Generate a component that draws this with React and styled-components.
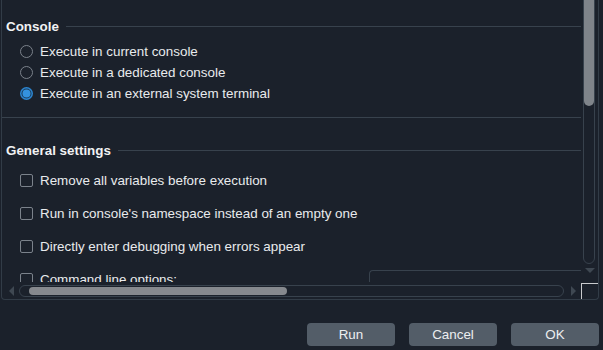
import React from "react";
import styled, { createGlobalStyle } from "styled-components";

const Global = createGlobalStyle`
  html, body { margin: 0; padding: 0; background: #1b212b; }
  body { font-family: "Liberation Sans", Arial, sans-serif; font-size: 13.4px; color: #e9ebed; }
  #root { width: 603px; height: 350px; overflow: hidden; }
`;

const Dialog = styled.div`
  display: flex;
  flex-direction: column;
  height: 350px;
  padding: 0 4px 0 1px;
  box-sizing: border-box;
`;

const Panel = styled.div`
  display: grid;
  grid-template-columns: 1fr 16px;
  grid-template-rows: 282px 17px;
  border: 1px solid #323c47;
  border-top: none;
  border-radius: 0 0 4px 4px;
`;

const Viewport = styled.div`
  overflow: hidden;
  padding-right: 1px;
`;

const Group = styled.div`
  display: flex;
  flex-direction: column;
  padding-top: ${(p) => p.$top}px;
  padding-bottom: ${(p) => p.$bottom || 0}px;
  border-bottom: ${(p) => (p.$sep ? "1px solid #38424d" : "none")};
`;

const Title = styled.div`
  display: flex;
  align-items: center;
  gap: 7px;
  height: 16px;
  padding-left: 4px;
  font-weight: bold;
  color: #f1f2f3;
  margin-bottom: ${(p) => p.$gap}px;
  &::after {
    content: "";
    flex: 1;
    height: 1px;
    background: #38424d;
  }
`;

const OptionRow = styled.label`
  display: flex;
  align-items: center;
  gap: 7px;
  height: ${(p) => p.$h}px;
  padding-left: 18px;
  white-space: nowrap;
`;

const RadioOff = styled.span`
  width: 11px;
  height: 11px;
  border: 1px solid #7b828b;
  border-radius: 50%;
  flex: none;
`;

const CheckBox = styled.span`
  width: 11px;
  height: 11px;
  border: 1px solid #7b828b;
  border-radius: 2px;
  flex: none;
`;

const Label = styled.span`
  flex: ${(p) => (p.$grow ? 1 : "none")};
`;

const CmdInput = styled.div`
  width: 212px;
  height: 24px;
  margin-top: 4px;
  border: 1px solid #38424d;
  border-radius: 4px 0 0 4px;
  border-right: none;
  box-sizing: border-box;
  flex: none;
`;

const VScroll = styled.div`
  display: flex;
  flex-direction: column;
  align-items: flex-start;
  padding-left: 1px;
`;

const VTrack = styled.div`
  width: 10px;
  height: 266px;
  margin-top: -4px;
  border: 1px solid #38424d;
  border-radius: 0 0 6px 6px;
  display: flex;
  flex-direction: column;
`;

const VThumb = styled.div`
  width: 10px;
  height: 109px;
  background: #7f848a;
  border-radius: 0 0 5px 5px;
`;

const Arrow = styled.svg`
  display: block;
  flex: none;
`;

const HScroll = styled.div`
  display: flex;
  align-items: center;
  padding-left: 7px;
`;

const HTrack = styled.div`
  width: 545px;
  height: 12px;
  margin-left: 4px;
  box-sizing: border-box;
  border: 1px solid #38424d;
  border-radius: 6px;
  display: flex;
  align-items: center;
  padding-left: 9px;
`;

const HThumb = styled.div`
  width: 258px;
  height: 8px;
  background: #86898e;
  border-radius: 4px;
`;

const Corner = styled.div`
  width: 16px;
  height: 15px;
  align-self: start;
  border-left: 1px solid #c9cbce;
  border-top: 1px solid #c9cbce;
  margin-left: -1px;
  margin-top: 1px;
`;

const ButtonBar = styled.div`
  display: flex;
  justify-content: flex-end;
  gap: 14px;
  margin-top: 23px;
`;

const Button = styled.button`
  width: 88px;
  height: 23px;
  border: none;
  border-radius: 4px;
  background: #535d68;
  color: #eceef0;
  font-family: "Liberation Sans", Arial, sans-serif;
  font-size: 13.4px;
  padding: 0;
`;

function RadioOn() {
  return (
    <Arrow width="13" height="13" viewBox="0 0 13 13">
      <circle cx="6.5" cy="6.5" r="6.5" fill="#2c86d2" />
      <circle cx="6.5" cy="6.5" r="5" fill="#1b3a57" />
      <circle cx="6.5" cy="6.5" r="4" fill="#3492de" />
    </Arrow>
  );
}

export default function App() {
  return (
    <>
      <Global />
      <Dialog>
        <Panel>
          <Viewport>
            <Group $top={18} $bottom={13} $sep>
              <Title $gap={7}>Console</Title>
              <OptionRow $h={21}><RadioOff />Execute in current console</OptionRow>
              <OptionRow $h={21}><RadioOff />Execute in a dedicated console</OptionRow>
              <OptionRow $h={21}><RadioOn />Execute in an external system terminal</OptionRow>
            </Group>
            <Group $top={24}>
              <Title $gap={6}>General settings</Title>
              <OptionRow $h={33}><CheckBox /><Label>Remove all variables before execution</Label></OptionRow>
              <OptionRow $h={33}><CheckBox /><Label>Run in console's namespace instead of an empty one</Label></OptionRow>
              <OptionRow $h={33}><CheckBox /><Label>Directly enter debugging when errors appear</Label></OptionRow>
              <OptionRow $h={33}><CheckBox /><Label $grow>Command line options:</Label><CmdInput /></OptionRow>
            </Group>
          </Viewport>
          <VScroll>
            <VTrack><VThumb /></VTrack>
            <Arrow width="10" height="6" viewBox="0 0 10 6" style={{ marginTop: 4, marginLeft: 2 }}>
              <polygon points="0,0 10,0 5,5" fill="#3f4852" />
            </Arrow>
          </VScroll>
          <HScroll>
            <Arrow width="6" height="10" viewBox="0 0 6 10">
              <polygon points="5,0 5,10 0,5" fill="#3f4852" />
            </Arrow>
            <HTrack><HThumb /></HTrack>
            <Arrow width="6" height="10" viewBox="0 0 6 10" style={{ marginLeft: 7 }}>
              <polygon points="0,0 0,10 5,5" fill="#3f4852" />
            </Arrow>
          </HScroll>
          <Corner />
        </Panel>
        <ButtonBar>
          <Button>Run</Button>
          <Button>Cancel</Button>
          <Button>OK</Button>
        </ButtonBar>
      </Dialog>
    </>
  );
}
